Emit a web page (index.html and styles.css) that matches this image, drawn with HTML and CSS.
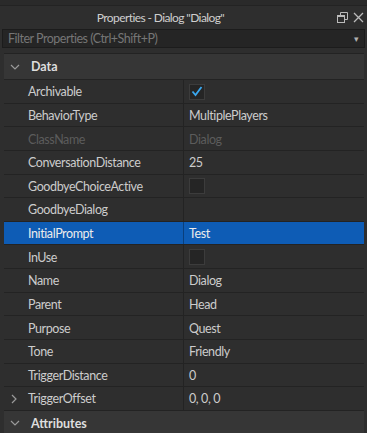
FILE: index.html
```html
<!DOCTYPE html>
<html>
<head>
  <title>Properties</title>
  <link rel="stylesheet" href="styles.css">
</head>
<body>
  <div class="panel">
    <div class="top-strip"></div>
    <div class="title-bar">
      <span class="title">Properties - Dialog "Dialog"</span>
      <div class="title-icons">
        <svg width="11" height="11" viewBox="0 0 11 11"><path d="M3.5 0.5h7v7h-3M3.5 0.5v3" fill="none" stroke="#bbb" stroke-width="1"/><rect x="0.5" y="3.5" width="7" height="7" fill="none" stroke="#bbb" stroke-width="1"/><path d="M0.5 4.5h7" stroke="#bbb"/></svg>
        <svg width="11" height="11" viewBox="0 0 11 11"><path d="M1 1L10 10M10 1L1 10" stroke="#bbb" stroke-width="1.3"/></svg>
      </div>
    </div>
    <div class="filter">
      <span>Filter Properties (Ctrl+Shift+P)</span>
      <span class="drop">&#9662;</span>
    </div>
    <div class="props">
      <div class="section">
        <svg class="chev" width="10" height="6" viewBox="0 0 10 6"><path d="M1 1l4 4 4-4" fill="none" stroke="#9a9a9a" stroke-width="1.2"/></svg>
        <span>Data</span>
      </div>
      <div class="row"><div class="name">Archivable</div><div class="value"><span class="check on"><svg width="12" height="11" viewBox="0 0 12 11"><path d="M1.5 5.5l3 3.5 6-8" fill="none" stroke="#3aa8f0" stroke-width="1.8"/></svg></span></div></div>
      <div class="row"><div class="name">BehaviorType</div><div class="value">MultiplePlayers</div></div>
      <div class="row disabled"><div class="name">ClassName</div><div class="value">Dialog</div></div>
      <div class="row"><div class="name">ConversationDistance</div><div class="value">25</div></div>
      <div class="row"><div class="name">GoodbyeChoiceActive</div><div class="value"><span class="check"></span></div></div>
      <div class="row"><div class="name">GoodbyeDialog</div><div class="value"></div></div>
      <div class="row selected"><div class="name">InitialPrompt</div><div class="value">Test</div></div>
      <div class="row"><div class="name">InUse</div><div class="value"><span class="check"></span></div></div>
      <div class="row"><div class="name">Name</div><div class="value">Dialog</div></div>
      <div class="row"><div class="name">Parent</div><div class="value">Head</div></div>
      <div class="row"><div class="name">Purpose</div><div class="value">Quest</div></div>
      <div class="row"><div class="name">Tone</div><div class="value">Friendly</div></div>
      <div class="row"><div class="name">TriggerDistance</div><div class="value">0</div></div>
      <div class="row"><div class="name"><svg class="expand" width="6" height="10" viewBox="0 0 6 10"><path d="M1 1l4 4-4 4" fill="none" stroke="#9a9a9a" stroke-width="1.2"/></svg>TriggerOffset</div><div class="value">0, 0, 0</div></div>
      <div class="section">
        <svg class="chev" width="10" height="6" viewBox="0 0 10 6"><path d="M1 1l4 4 4-4" fill="none" stroke="#9a9a9a" stroke-width="1.2"/></svg>
        <span>Attributes</span>
      </div>
    </div>
  </div>
</body>
</html>
```
FILE: styles.css
```css
body {
  margin: 0;
  background: #2b2b2b;
  font-family: Lato, "Noto Sans", sans-serif;
  font-size: 12.5px;
  letter-spacing: -0.4px;
  color: #cccccc;
}
.panel {
  width: 367px;
  height: 433px;
  overflow: hidden;
  background: #2e2e2e;
}
.top-strip {
  height: 5px;
  background: #2a2a2a;
  border-bottom: 1px solid #232323;
}
.title-bar {
  height: 23px;
  display: flex;
  align-items: center;
  justify-content: center;
  position: relative;
  background: #2e2e2e;
}
.title {
  color: #cfcfcf;
  font-size: 12px;
  letter-spacing: -0.6px;
  margin-right: 46px;
  margin-top: -1px;
}
.title-icons {
  position: absolute;
  right: 3px;
  top: 6px;
  display: flex;
  gap: 5px;
}
.filter {
  height: 17px;
  margin: 0 2px;
  padding: 0 6px 0 5px;
  display: flex;
  align-items: center;
  justify-content: space-between;
  background: #252525;
  border: 1px solid #1c1c1c;
  color: #767676;
  letter-spacing: -0.5px;
}
.drop {
  font-size: 9px;
  color: #b0b0b0;
}
.props {
  margin: 5px 3px 0 4px;
  border-top: 1px solid #232323;
}
.section {
  height: 25px;
  display: flex;
  align-items: center;
  gap: 11px;
  padding-left: 6px;
  background: #363636;
  border-bottom: 1px solid #232323;
  font-weight: bold;
  color: #dedede;
  letter-spacing: 0;
}
.row {
  height: 22.64px;
  display: grid;
  grid-template-columns: 180px 1fr;
  border-bottom: 1px solid #232323;
  background: #2e2e2e;
}
.name {
  position: relative;
  display: flex;
  align-items: center;
  padding: 1px 0 0 24px;
  border-right: 1px solid #232323;
}
.value {
  display: flex;
  align-items: center;
  padding: 1px 0 0 5px;
}
.disabled .name,
.disabled .value {
  color: #5c5c5c;
}
.selected {
  background: #0e5cb5;
  color: #ececec;
}
.selected .name {
  border-right-color: #0a3f7c;
}
.check {
  width: 14px;
  height: 14px;
  background: #252525;
  border: 1px solid #3c3c3c;
  display: flex;
  align-items: center;
  justify-content: center;
}
.expand {
  position: absolute;
  left: 7px;
  top: 7px;
}
```
